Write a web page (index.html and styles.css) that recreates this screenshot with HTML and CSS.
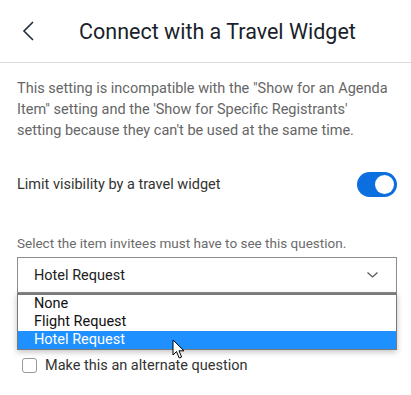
FILE: index.html
```html
<!DOCTYPE html>
<html>
<head>
<meta charset="utf-8">
<link rel="stylesheet" href="styles.css">
</head>
<body>
<div class="page">
  <header class="header">
    <svg class="back" width="12" height="20" viewBox="0 0 12 20"><path d="M11 1 L2 10 L11 19" fill="none" stroke="#1f2d3d" stroke-width="1.6"/></svg>
    <h1 class="title">Connect with a Travel Widget</h1>
  </header>
  <main class="content">
    <p class="note">This setting is incompatible with the "Show for an Agenda Item" setting and the 'Show for Specific Registrants' setting because they can't be used at the same time.</p>
    <div class="toggle-row">
      <span class="toggle-label">Limit visibility by a travel widget</span>
      <span class="toggle"><span class="knob"></span></span>
    </div>
    <div class="field">
      <div class="field-label">Select the item invitees must have to see this question.</div>
      <div class="select-wrap">
        <div class="select">
          <span>Hotel Request</span>
          <svg class="caret" width="11" height="6" viewBox="0 0 11 6"><path d="M0.5 0.5 L5.5 5 L10.5 0.5" fill="none" stroke="#555" stroke-width="1.2"/></svg>
        </div>
        <ul class="menu">
          <li class="opt">None</li>
          <li class="opt">Flight Request</li>
          <li class="opt selected">Hotel Request</li>
        </ul>
        <svg class="cursor" width="14" height="21" viewBox="0 0 14 21"><path d="M1 1 L1 16 L4.5 12.5 L7.2 19 L9.6 18 L7 11.8 L12 11.8 Z" fill="#fff" stroke="#000" stroke-width="1" stroke-linejoin="miter"/></svg>
      </div>
    </div>
    <label class="check-row">
      <span class="checkbox"></span>
      <span class="check-label">Make this an alternate question</span>
    </label>
  </main>
</div>
</body>
</html>
```
FILE: styles.css
```css
* { box-sizing: border-box; }
html, body { margin: 0; padding: 0; background: #fff; }
body { font-family: Roboto, "Noto Sans", sans-serif; color: #333; width: 411px; height: 395px; overflow: hidden; }
.header {
  height: 63px;
  border-bottom: 1px solid #dcdcdc;
  display: flex;
  align-items: center;
  padding-left: 22px;
}
.back { flex: none; }
.title {
  margin: 0 0 0 45px;
  font-size: 21.5px;
  font-weight: 400;
  color: #1a1f2b;
}
.content { padding: 0 14px 0 17px; }
.note {
  margin: 15px 0 0;
  padding-right: 8px;
  font-size: 14.5px;
  line-height: 21px;
  color: #666;
}
.toggle-row {
  display: flex;
  align-items: center;
  justify-content: space-between;
  margin-top: 31px;
}
.toggle-label { font-size: 14.5px; color: #333; }
.toggle {
  width: 40px; height: 25px; border-radius: 13px;
  background: #0b6fe0;
  display: flex; align-items: center; justify-content: flex-end;
  padding-right: 3px;
}
.knob { width: 19px; height: 19px; border-radius: 50%; background: #fff; }
.field { margin-top: 38px; }
.field-label { font-size: 13.5px; color: #6b6b6b; }
.select-wrap { position: relative; margin-top: 6px; }
.select {
  height: 36px;
  border: 1px solid #8d8d8d;
  display: flex; align-items: center; justify-content: space-between;
  padding: 0 18px 0 16px;
  font-size: 14.5px; color: #222;
}
.menu {
  list-style: none; margin: 0; padding: 0;
  border: 1px solid #7a7a7a;
  border-top-width: 2px;
  box-shadow: 0 2px 6px rgba(0,0,0,0.25);
  background: #fff;
}
.opt { height: 18px; line-height: 18px; padding-left: 16px; font-size: 14.5px; color: #111; }
.opt.selected { background: #1e90ff; color: #fff; }
.cursor { position: absolute; left: 155px; top: 82px; }
.check-row { display: flex; align-items: center; margin-top: 7px; padding-left: 5px; }
.checkbox {
  width: 15px; height: 15px; border: 1px solid #999; border-radius: 3px; background: #fff;
}
.check-label { margin-left: 8px; font-size: 14.5px; color: #333; }
```
